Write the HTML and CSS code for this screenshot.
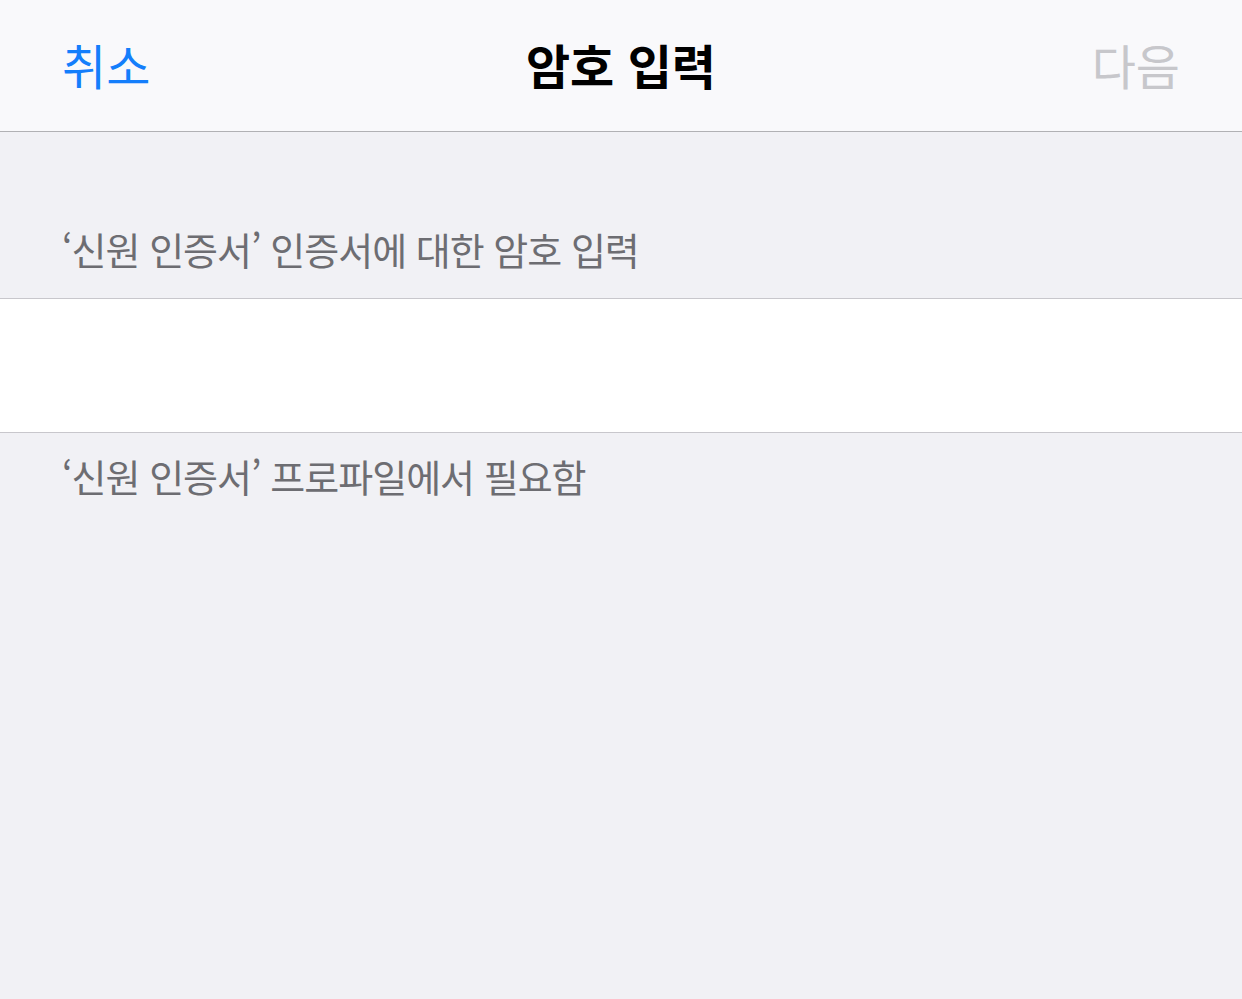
FILE: index.html
```html
<!DOCTYPE html>
<html lang="ko">
<head>
<meta charset="utf-8">
<link rel="stylesheet" href="styles.css">
</head>
<body>
<div class="nav">
  <span class="nav-left">취소</span>
  <span class="nav-title">암호 입력</span>
  <span class="nav-right">다음</span>
</div>
<div class="section-header">‘신원 인증서’ 인증서에 대한 암호 입력</div>
<div class="row"></div>
<div class="section-footer">‘신원 인증서’ 프로파일에서 필요함</div>
</body>
</html>
```
FILE: styles.css
```css
html, body {
  margin: 0;
  padding: 0;
  height: 100%;
}
body {
  background: #f1f1f5;
  font-family: "Noto Sans CJK KR", "Noto Sans", sans-serif;
  overflow: hidden;
}
.nav {
  height: 131px;
  box-sizing: border-box;
  background: #f9f9fb;
  border-bottom: 1px solid #b1b1b4;
  display: grid;
  grid-template-columns: 1fr auto 1fr;
  align-items: center;
  padding: 0 62px 4px;
  font-size: 48px;
  line-height: 1;
}
.nav {
  height: 132px;
}
.nav-left {
  color: #147efb;
  justify-self: start;
}
.nav-title {
  color: #000;
  font-weight: 700;
  justify-self: center;
}
.nav-right {
  color: #c7c7cb;
  justify-self: end;
}
.section-header {
  height: 166px;
  box-sizing: border-box;
  display: flex;
  align-items: flex-end;
  padding: 0 62px 30px;
  color: #6d6d72;
  font-size: 38px;
  letter-spacing: -1px;
  line-height: 1;
}
.row {
  height: 133px;
  background: #fff;
  border-top: 1px solid #c8c7cc;
  border-bottom: 1px solid #c8c7cc;
}
.section-footer {
  padding: 24px 62px 0;
  color: #6d6d72;
  font-size: 38px;
  letter-spacing: -1px;
  line-height: 1;
}
```
